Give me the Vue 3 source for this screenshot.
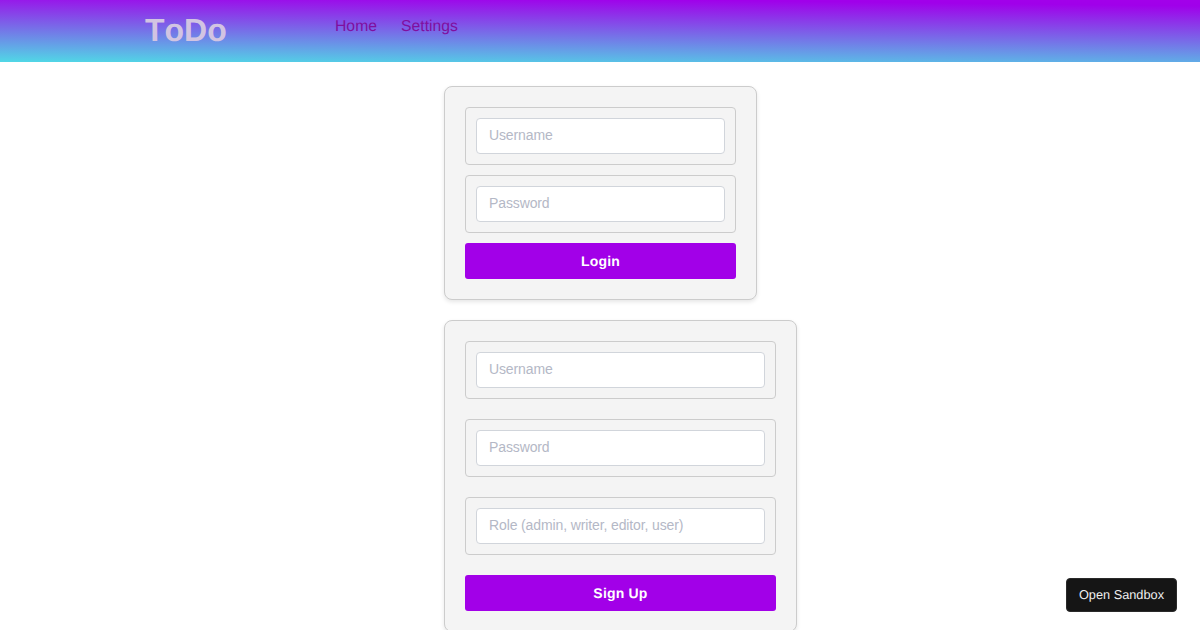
<template>
  <div class="page">
    <header class="topbar">
      <div class="logo">ToDo</div>
      <nav class="nav">
        <a class="nav-link">Home</a>
        <a class="nav-link">Settings</a>
      </nav>
    </header>

    <main class="content">
      <form class="card login" @submit.prevent>
        <div class="field" v-for="item in loginFields" :key="item">
          <input class="input" type="text" :placeholder="item" />
        </div>
        <button class="submit" type="submit">Login</button>
      </form>

      <form class="card signup" @submit.prevent>
        <div class="field" v-for="item in signupFields" :key="item">
          <input class="input" type="text" :placeholder="item" />
        </div>
        <button class="submit" type="submit">Sign Up</button>
      </form>
    </main>

    <button class="sandbox">Open Sandbox</button>
  </div>
</template>

<script setup>
const loginFields = ["Username", "Password"];
const signupFields = ["Username", "Password", "Role (admin, writer, editor, user)"];
</script>

<style>
html,
body {
  margin: 0;
  height: 100%;
  overflow: hidden;
  background: #fff;
}
</style>

<style scoped>
.page {
  height: 630px;
  overflow: hidden;
  font-family: "Liberation Sans", Arial, sans-serif;
  text-rendering: geometricPrecision;
}

.topbar {
  display: flex;
  align-items: flex-start;
  height: 62px;
  padding-left: 145px;
  box-sizing: border-box;
  background: linear-gradient(180.7deg, #a300ea 0%, #a000ea 8%, #50d8e6 100%);
}

.logo {
  width: 190px;
  margin-top: 10px;
  font-size: 32px;
  line-height: 40px;
  font-weight: bold;
  font-kerning: none;
  color: #d2c4e2;
}

.nav {
  display: flex;
  gap: 24px;
  margin-top: 18px;
}

.nav-link {
  font-size: 15.75px;
  line-height: 18px;
  color: #800f9f;
}

.content {
  display: flex;
  flex-direction: column;
  align-items: flex-start;
  gap: 20px;
  padding: 24px 0 0 444px;
}

.card {
  display: flex;
  flex-direction: column;
  box-sizing: border-box;
  padding: 20px;
  background: #f4f4f4;
  border: 1px solid #ccc;
  border-radius: 8px;
  box-shadow: 0 2px 4px rgba(0, 0, 0, 0.1);
}

.login {
  width: 313px;
  gap: 10px;
}

.signup {
  width: 353px;
  gap: 20px;
}

.field {
  padding: 10px;
  border: 1px solid #ccc;
  border-radius: 4px;
}

.input {
  display: block;
  width: 100%;
  height: 36px;
  box-sizing: border-box;
  padding: 0 12px 2px;
  font-family: inherit;
  font-size: 14px;
  letter-spacing: -0.12px;
  background: #fff;
  border: 1px solid #d1d5db;
  border-radius: 4px;
}

.input::placeholder {
  color: #b4b8c6;
}

.submit {
  height: 36px;
  padding: 0;
  font-family: inherit;
  font-size: 14px;
  font-weight: bold;
  letter-spacing: 0.2px;
  text-rendering: geometricPrecision;
  color: #fff;
  background: #a200e8;
  border: none;
  border-radius: 3px;
}

.sandbox {
  position: fixed;
  right: 23px;
  bottom: 18px;
  width: 111px;
  height: 34px;
  padding: 0 0 1px;
  font-family: inherit;
  font-size: 12.75px;
  text-rendering: geometricPrecision;
  color: #f0f0f0;
  background: #151515;
  border: 1px solid #2a2a2a;
  border-radius: 4px;
}
</style>
